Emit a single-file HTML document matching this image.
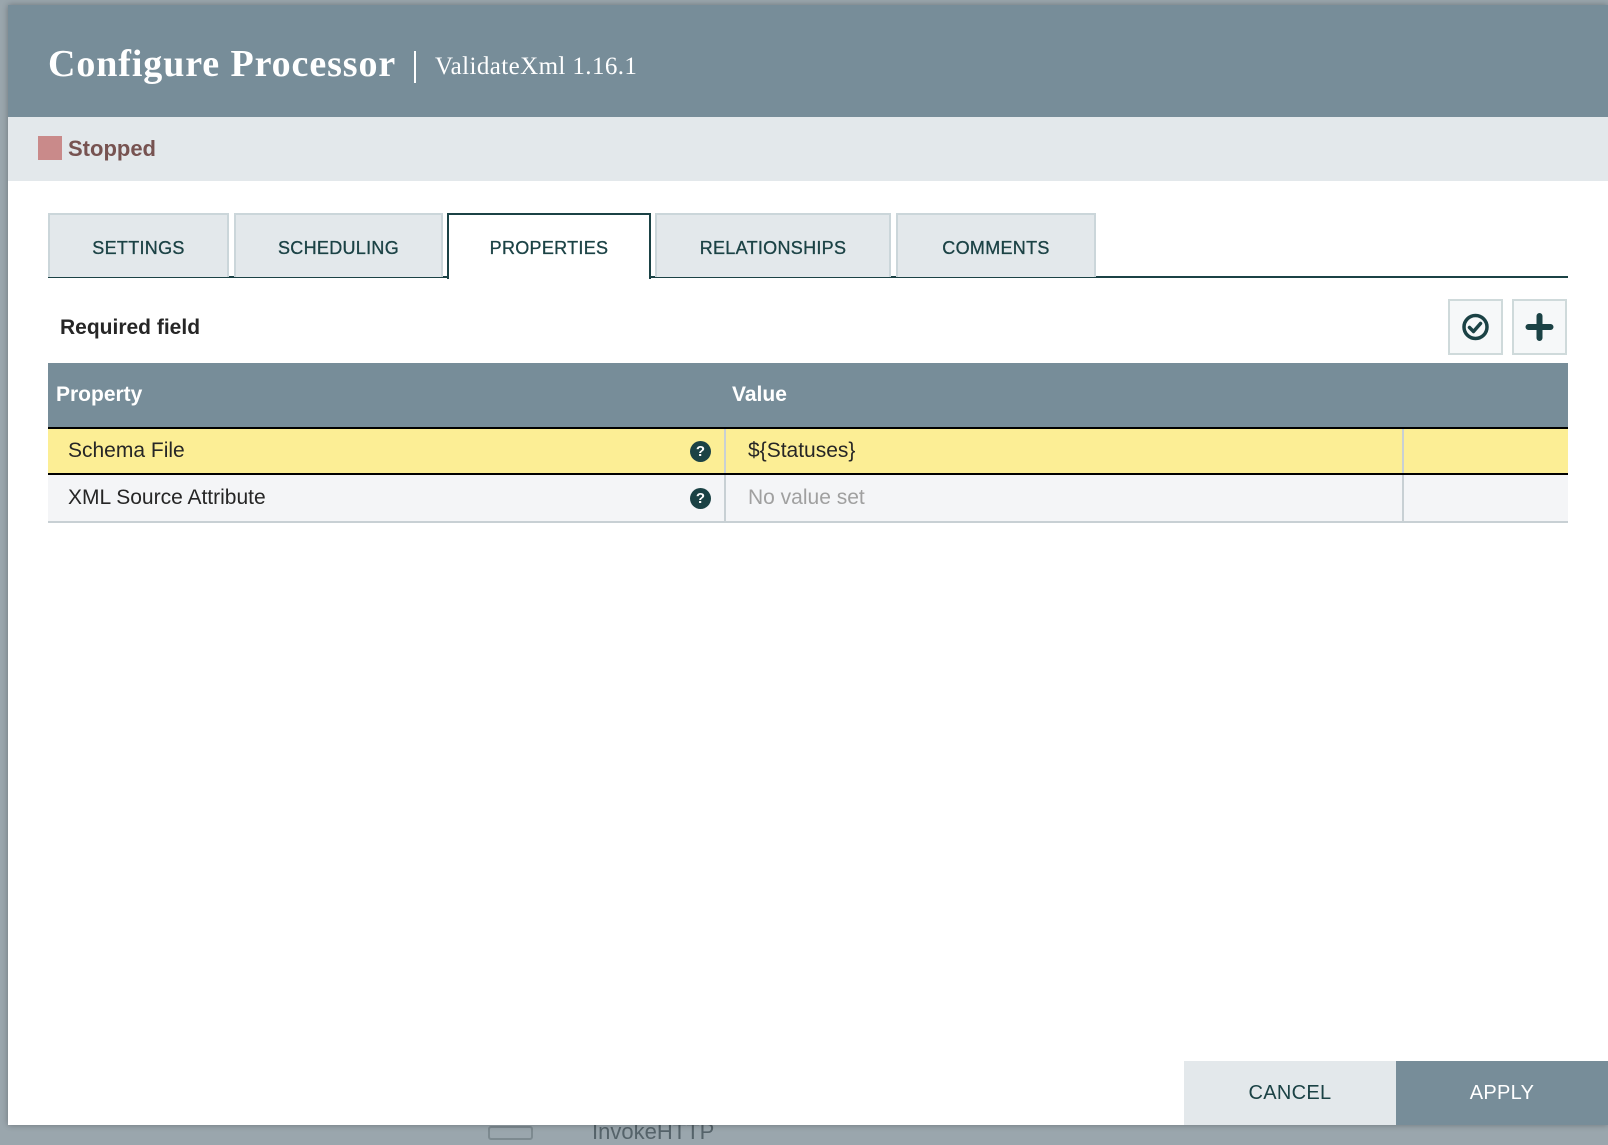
<!DOCTYPE html>
<html><head><meta charset="utf-8"><style>
*{box-sizing:border-box;margin:0;padding:0}
body{width:1608px;height:1136px;overflow:hidden;background:#9aa6ad;font-family:"Liberation Sans",sans-serif;position:relative}
.dlg{position:absolute;left:8px;top:5px;width:1600px;height:1120px;background:#fff;box-shadow:0 0 6px rgba(0,0,0,.3)}
.hdr{position:absolute;left:0;top:0;width:1600px;height:112px;background:#778d99;color:#fff}
.title{position:absolute;left:40px;top:37px;font-family:"Liberation Serif",serif;font-weight:bold;font-size:38px;letter-spacing:0.9px}
.sep{position:absolute;left:406px;top:46px;width:2px;height:32px;background:#fff}
.sub{position:absolute;left:427px;top:48px;font-family:"Liberation Serif",serif;font-size:25px;letter-spacing:0.4px}
.stat{position:absolute;left:0;top:112px;width:1600px;height:64px;background:#e3e8eb}
.sq{position:absolute;left:30px;top:19px;width:24px;height:24px;background:#c98a8a}
.stxt{position:absolute;left:60px;top:19px;font-size:22px;font-weight:bold;color:#775351}
.tabline{position:absolute;left:40px;top:271px;width:1520px;height:2px;background:#1b4245}
.tab{position:absolute;top:208px;height:64px;background:#e3e8eb;border:2px solid #cbd6da;border-bottom:none;color:#1b4245;font-size:18px;text-align:center;line-height:66px;letter-spacing:.3px;-webkit-text-stroke:0.3px #1b4245}
.tab.act{background:#fff;border:2px solid #1b4245;border-bottom:none;height:66px;z-index:2}
.req{position:absolute;left:52px;top:311px;font-size:21px;font-weight:bold;color:#262626}
.btn{position:absolute;top:294px;width:55px;height:56px;border:2px solid #cfdadb;background:#f6f8f9}
.th{position:absolute;left:40px;top:358px;width:1520px;height:64px;background:#778d99;color:#fff;font-size:21px;font-weight:bold}
.row{position:absolute;left:40px;width:1520px;font-size:21px;color:#262626}
.cell{position:absolute;top:0;height:100%}
.q{position:absolute;left:642px;width:21px;height:21px;border-radius:50%;background:#1b4245;color:#fff;font-size:15px;font-weight:bold;text-align:center;line-height:21px}
.fb{position:absolute;top:1056px;width:212px;height:64px;font-size:20px;text-align:center;line-height:64px;letter-spacing:.3px}
</style></head><body>
<div style="position:absolute;left:488px;top:1126px;width:45px;height:14px;border:2px solid #7d8a90;border-radius:3px"></div>
<div style="position:absolute;left:592px;top:1119px;font-size:22px;color:#55636a">InvokeHTTP</div>
<div class="dlg">
 <div class="hdr"><div class="title">Configure Processor</div><div class="sep"></div><div class="sub">ValidateXml 1.16.1</div></div>
 <div class="stat"><div class="sq"></div><div class="stxt">Stopped</div></div>
 <div class="tabline"></div>
 <div class="tab" style="left:40px;width:181px">SETTINGS</div>
 <div class="tab" style="left:226px;width:209px">SCHEDULING</div>
 <div class="tab act" style="left:439px;width:204px">PROPERTIES</div>
 <div class="tab" style="left:647px;width:236px">RELATIONSHIPS</div>
 <div class="tab" style="left:888px;width:200px">COMMENTS</div>
 <div class="req">Required field</div>
 <div class="btn" style="left:1440px"><svg width="51" height="52" viewBox="0 0 51 52"><circle cx="25.5" cy="26" r="11.5" fill="none" stroke="#1b4245" stroke-width="3.5"/><path d="M19.5 26.5l4 4 7-8" fill="none" stroke="#1b4245" stroke-width="3.5" stroke-linecap="round" stroke-linejoin="round"/></svg></div>
 <div class="btn" style="left:1504px"><svg width="51" height="52" viewBox="0 0 51 52"><path d="M25.5 15v22M14.5 26h22" stroke="#1b4245" stroke-width="6" stroke-linecap="round"/></svg></div>
 <div class="th"><span style="position:absolute;left:8px;top:20px">Property</span><span style="position:absolute;left:684px;top:20px">Value</span></div>
 <div class="row" style="top:422px;height:48px;background:#fcee95;border-top:2px solid #000;border-bottom:2px solid #000">
  <span style="position:absolute;left:20px;top:10px">Schema File</span><div class="q" style="top:12px">?</div>
  <div class="cell" style="left:676px;border-left:2px solid #c8d0d4"></div>
  <span style="position:absolute;left:700px;top:10px">${Statuses}</span>
  <div class="cell" style="left:1354px;border-left:2px solid #c8d0d4"></div>
 </div>
 <div class="row" style="top:470px;height:48px;background:#f4f5f7;border-bottom:2px solid #c8d0d4">
  <span style="position:absolute;left:20px;top:11px">XML Source Attribute</span><div class="q" style="top:13px">?</div>
  <div class="cell" style="left:676px;border-left:2px solid #c8d0d4"></div>
  <span style="position:absolute;left:700px;top:11px;color:#a0a0a0">No value set</span>
  <div class="cell" style="left:1354px;border-left:2px solid #c8d0d4"></div>
 </div>
 <div class="fb" style="left:1176px;background:#e3e8eb;color:#1b4245">CANCEL</div>
 <div class="fb" style="left:1388px;background:#778d99;color:#fff">APPLY</div>
</div>
</body></html>
